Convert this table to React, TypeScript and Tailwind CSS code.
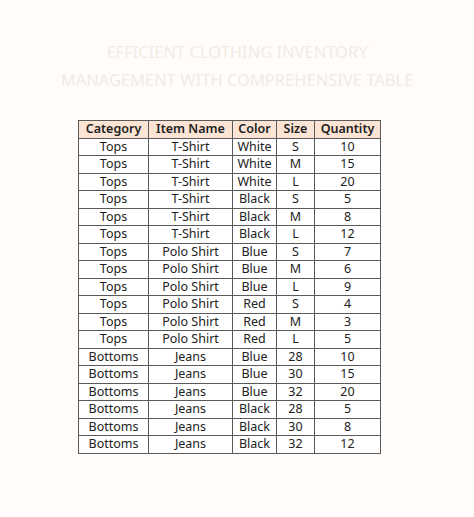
const rows: [string, string, string, string, string][] = [
  ['Tops', 'T-Shirt', 'White', 'S', '10'],
  ['Tops', 'T-Shirt', 'White', 'M', '15'],
  ['Tops', 'T-Shirt', 'White', 'L', '20'],
  ['Tops', 'T-Shirt', 'Black', 'S', '5'],
  ['Tops', 'T-Shirt', 'Black', 'M', '8'],
  ['Tops', 'T-Shirt', 'Black', 'L', '12'],
  ['Tops', 'Polo Shirt', 'Blue', 'S', '7'],
  ['Tops', 'Polo Shirt', 'Blue', 'M', '6'],
  ['Tops', 'Polo Shirt', 'Blue', 'L', '9'],
  ['Tops', 'Polo Shirt', 'Red', 'S', '4'],
  ['Tops', 'Polo Shirt', 'Red', 'M', '3'],
  ['Tops', 'Polo Shirt', 'Red', 'L', '5'],
  ['Bottoms', 'Jeans', 'Blue', '28', '10'],
  ['Bottoms', 'Jeans', 'Blue', '30', '15'],
  ['Bottoms', 'Jeans', 'Blue', '32', '20'],
  ['Bottoms', 'Jeans', 'Black', '28', '5'],
  ['Bottoms', 'Jeans', 'Black', '30', '8'],
  ['Bottoms', 'Jeans', 'Black', '32', '12'],
]

const headers = ['Category', 'Item Name', 'Color', 'Size', 'Quantity']
const widths = ['w-[70px]', 'w-[84px]', 'w-[44px]', 'w-[38px]', 'w-[66px]']

export default function App() {
  return (
    <div className="w-[474px] h-[517px] bg-[#fffcfa] font-['Noto_Sans',sans-serif] pt-[38px]">
      <div className="text-center text-[16.5px] leading-[28px] text-[#f2ebe4]">
        <p>EFFICIENT CLOTHING INVENTORY</p>
        <p>MANAGEMENT WITH COMPREHENSIVE TABLE</p>
      </div>

      <div className="mt-[26px] ml-[78px]">
        <table className="border-collapse border border-[#5a5a5a] text-[12.5px] text-[#222] table-fixed">
          <thead>
            <tr className="bg-[#fbe4d3] h-[17.5px]">
              {headers.map((h, i) => (
                <th
                  key={h}
                  className={`${widths[i]} border border-[#5a5a5a] font-semibold p-0 leading-[16px] text-center`}
                >
                  {h}
                </th>
              ))}
            </tr>
          </thead>
          <tbody className="bg-white">
            {rows.map((r, idx) => (
              <tr key={idx} className="h-[17.5px]">
                {r.map((c, i) => (
                  <td key={i} className="border border-[#5a5a5a] p-0 leading-[16px] text-center">
                    {c}
                  </td>
                ))}
              </tr>
            ))}
          </tbody>
        </table>
      </div>
    </div>
  )
}
